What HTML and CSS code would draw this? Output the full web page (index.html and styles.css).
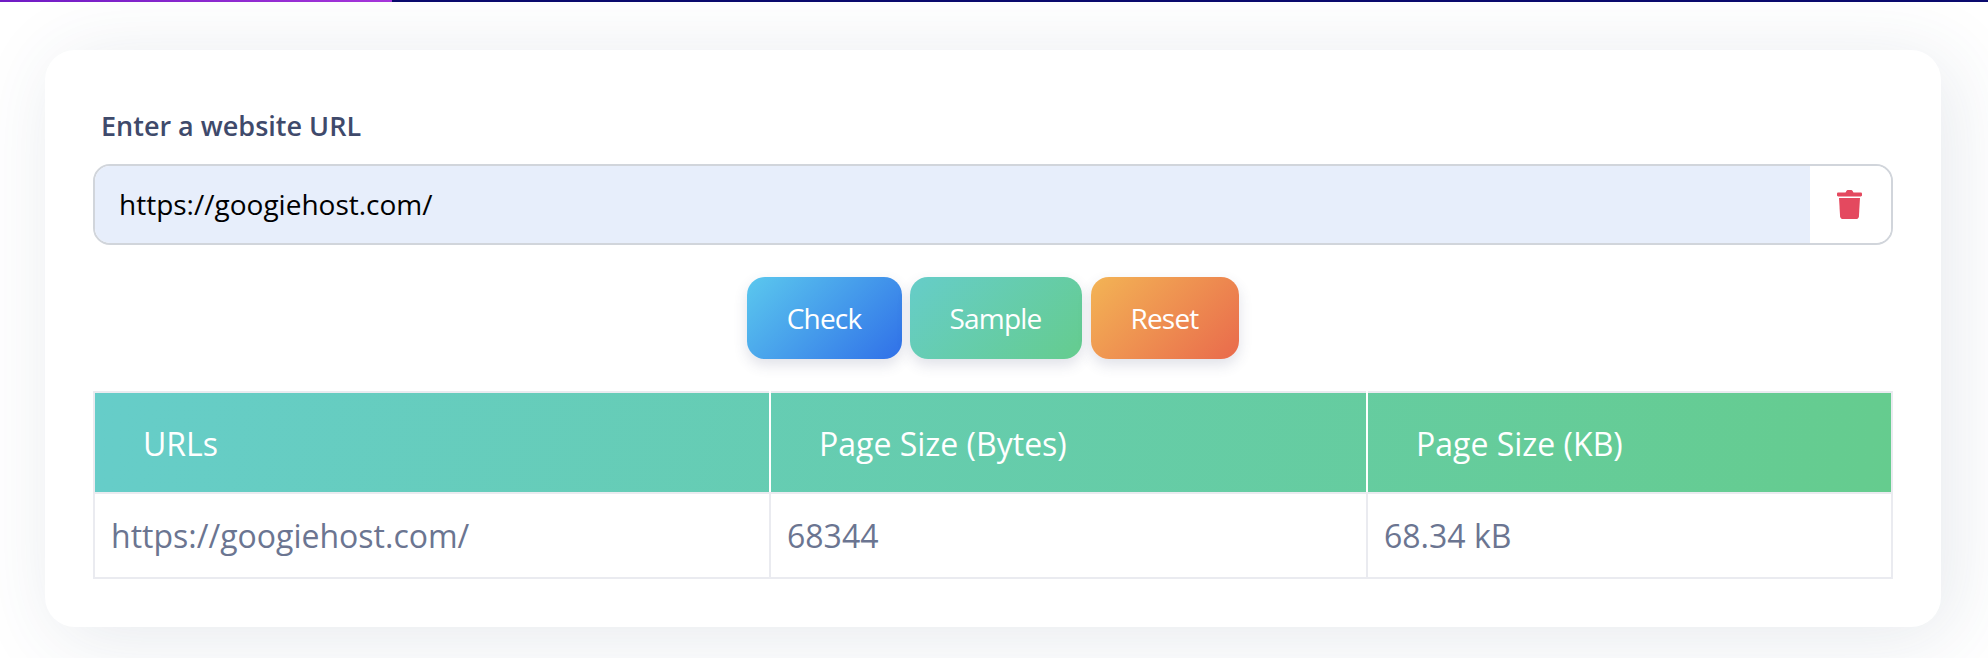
FILE: index.html
```html
<!DOCTYPE html>
<html lang="en">
<head>
    <meta charset="UTF-8">
    <meta name="viewport" content="width=device-width, initial-scale=1.0">
    <title>Page Size Checker</title>
    <link rel="stylesheet" href="styles.css">
</head>
<body>
    <div class="progress"><div class="progress-fill"></div></div>
    <div class="page">
        <div class="card">
            <label class="field-label" for="url">Enter a website URL</label>
            <div class="field">
                <input class="field-input" id="url" type="text" value="https://googiehost.com/">
                <button class="field-clear" aria-label="Clear">
                    <svg class="trash" viewBox="0 0 25 29" width="25" height="29">
                        <path d="M8.500 2.600 9.400.9C9.700.3 10.200 0 10.800 0h3.400c.6 0 1.100.3 1.400.9l.9 1.700h7.300c.6 0 1.200.5 1.200 1.200v1.500c0 .7-.6 1.200-1.200 1.200H1.200C.6 6.500 0 6 0 5.300V3.800c0-.7.6-1.200 1.200-1.200z"/>
                        <path d="M2 8h21l-1.100 18.400c-.1 1.500-1.300 2.600-2.700 2.600H5.800c-1.400 0-2.600-1.100-2.700-2.600z"/>
                    </svg>
                </button>
            </div>
            <div class="actions">
                <button class="button button-check">Check</button>
                <button class="button button-sample">Sample</button>
                <button class="button button-reset">Reset</button>
            </div>
            <table class="results">
                <thead>
                    <tr>
                        <th class="col-url">URLs</th>
                        <th class="col-bytes">Page Size (Bytes)</th>
                        <th>Page Size (KB)</th>
                    </tr>
                </thead>
                <tbody>
                    <tr>
                        <td>https://googiehost.com/</td>
                        <td>68344</td>
                        <td>68.34 kB</td>
                    </tr>
                </tbody>
            </table>
        </div>
    </div>
</body>
</html>
```

FILE: styles.css
```css
html, body {
    height: 100%;
}
body {
    font-family: "Open Sans", sans-serif;
    background-color: #fff;
    margin: 0;
    overflow: hidden;
}
.progress {
    height: 2px;
    background: #0a0a6e;
}
.progress-fill {
    width: 392px;
    height: 100%;
    background: linear-gradient(90deg, #6f1bc4, #a736dc);
}
.page {
    padding: 48px 47px 0 45px;
}
.card {
    background: #fff;
    border-radius: 30px;
    box-shadow: 10px 10px 80px rgba(50, 70, 110, 0.12);
    height: 577px;
    padding: 60px 48px 0 48px;
    box-sizing: border-box;
}
.field-label {
    display: block;
    font-size: 27px;
    font-weight: 600;
    line-height: 32px;
    color: #3f4a6b;
    margin: 0 0 22px 8px;
}
.field {
    display: flex;
    height: 81px;
    border: 2px solid #d1d5db;
    border-radius: 17px;
    overflow: hidden;
    box-sizing: border-box;
}
.field-input {
    flex: 1;
    min-width: 0;
    border: none;
    outline: none;
    background: #e7eefb;
    color: #000;
    font-family: inherit;
    font-size: 28px;
    padding: 0 0 2px 24px;
}
.field-clear {
    width: 81px;
    border: none;
    background: #fff;
    padding: 0 2px 0 0;
    display: flex;
    align-items: center;
    justify-content: center;
}
.trash {
    fill: #e4495f;
}
.actions {
    display: flex;
    justify-content: center;
    gap: 8px;
    margin: 32px 0;
    padding-right: 1px;
}
.button {
    height: 82px;
    border: none;
    border-radius: 18px;
    color: #fff;
    font-family: inherit;
    font-size: 28px;
    letter-spacing: -0.8px;
    box-shadow: 0 6px 14px rgba(60, 70, 110, 0.16);
    cursor: pointer;
}
.button-check {
    width: 155px;
    background: linear-gradient(135deg, #5bc8ee, #3070e8);
}
.button-sample {
    width: 172px;
    background: linear-gradient(135deg, #66cdc9, #65cc8e);
}
.button-reset {
    width: 148px;
    margin-left: 1px;
    background: linear-gradient(135deg, #f3b455, #e96a4c);
}
.results {
    width: 100%;
    border-collapse: collapse;
    table-layout: fixed;
    background: #fff;
}
.results thead tr {
    background: linear-gradient(100deg, #66cdc9, #65cc8e);
}
.results th {
    height: 101px;
    padding: 2px 0 0 48px;
    border: 2px solid #eaebf0;
    border-left-color: #fff;
    border-right-color: #fff;
    color: #fff;
    font-size: 32px;
    font-weight: 400;
    text-align: left;
    box-sizing: border-box;
}
.results th:first-child {
    border-left-color: #eaebf0;
}
.results th:last-child {
    border-right-color: #eaebf0;
}
.results .col-url {
    width: 676px;
}
.results .col-bytes {
    width: 597px;
}
.results td {
    height: 83px;
    padding: 0 0 0 16px;
    border: 2px solid #eaebf0;
    color: #6b7591;
    font-size: 32px;
}
```
